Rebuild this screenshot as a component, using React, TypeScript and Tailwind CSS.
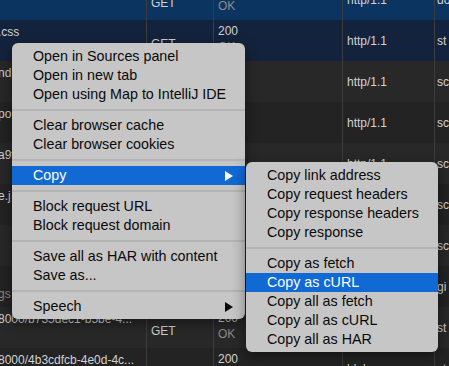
import clsx from "clsx";

type Row = {
  bg: string;
  name: string[];
  method?: string;
  status?: string[];
  protocol?: string;
  type?: string;
};

const rows: Row[] = [
  { bg: "bg-[#0b3460]", name: [], method: "GET", status: ["200", "OK"], protocol: "http/1.1", type: "do" },
  { bg: "bg-[#14233d]", name: [".css", ""], method: "GET", status: ["200", "OK"], protocol: "http/1.1", type: "st" },
  { bg: "bg-[#282828]", name: ["nd", ""], method: "GET", status: ["200", "OK"], protocol: "http/1.1", type: "sc" },
  { bg: "bg-[#232323]", name: ["po", ""], method: "GET", status: ["200", "OK"], protocol: "http/1.1", type: "sc" },
  { bg: "bg-[#282828]", name: ["a9f", ""], method: "GET", status: ["200", "OK"], protocol: "http/1.1", type: "sc" },
  { bg: "bg-[#232323]", name: ["e.j", ""], method: "GET", status: ["200", "OK"], protocol: "http/1.1", type: "sc" },
  { bg: "bg-[#282828]", name: [], method: "GET", status: ["200", "OK"], protocol: "http/1.1", type: "sc" },
  { bg: "bg-[#232323]", name: ["", "gs"], method: "GET", status: ["200", "OK"], protocol: "blob", type: "gi" },
  { bg: "bg-[#282828]", name: ["8000/b735dec1-b5be-4...", ""], method: "GET", status: ["200", "OK"], protocol: "blob", type: "st" },
  { bg: "bg-[#232323]", name: ["8000/4b3cdfcb-4e0d-4c...", ""], method: "GET", status: ["200", "OK"], protocol: "blob", type: "st" },
];

function TableRow({ row }: { row: Row }) {
  return (
    <div className={clsx("flex h-[41px] shrink-0 text-[12px] leading-[16px] text-[#d2d2d2]", row.bg)}>
      <div className="flex w-[147px] shrink-0 flex-col overflow-hidden whitespace-nowrap border-r border-[#3d3d3d] pt-[4px] pl-0">
        <span className="ml-[-2px] h-[16px]">{row.name[0]}</span>
        <span className="ml-[-2px] h-[16px] text-[#8c8c8c]">{row.name[1]}</span>
      </div>
      <div className="flex w-[67px] shrink-0 items-center border-r border-[#3d3d3d] pl-[4px] pt-[6px]">
        {row.method}
      </div>
      <div className="flex w-[129px] shrink-0 flex-col border-r border-[#3d3d3d] pl-[4px] pt-[3px]">
        <span>{row.status?.[0]}</span>
        <span className="text-[#8c8c8c]">{row.status?.[1]}</span>
      </div>
      <div className="flex w-[92px] shrink-0 items-center border-r border-[#3d3d3d] pl-[4px]">
        {row.protocol}
      </div>
      <div className="flex flex-1 items-center pl-[2px]">{row.type}</div>
    </div>
  );
}

function Item({ label, active, arrow }: { label: string; active?: boolean; arrow?: boolean }) {
  return (
    <div
      className={clsx(
        "flex h-[19px] items-center justify-between pl-[21px] pr-[12px] whitespace-nowrap",
        active ? "bg-[#1169d4] text-white" : "text-[#0a0a0a]"
      )}
    >
      <span>{label}</span>
      {arrow && (
        <svg width="8" height="10" viewBox="0 0 8 10">
          <path d="M0 0L8 5L0 10Z" fill="currentColor" />
        </svg>
      )}
    </div>
  );
}

function Sep() {
  return (
    <div className="flex h-[12px] items-center">
      <div className="h-[2px] w-full bg-[#b4b4b4]" />
    </div>
  );
}

export default function App() {
  return (
    <div
      className="relative h-[366px] w-[449px] overflow-hidden bg-[#242424]"
      style={{ fontFamily: '"Liberation Sans", Arial, sans-serif' }}
    >
      <div className="mt-[-21px] flex flex-col">
        {rows.map((r, i) => (
          <TableRow key={i} row={r} />
        ))}
      </div>

      <div className="absolute left-[12px] top-[43px] w-[233px] rounded-[6px] bg-[#c6c6c6] pt-[4px] pb-[3px] text-[14.3px] leading-[19px] shadow-[0_4px_14px_rgba(0,0,0,0.45)]">
        <Item label="Open in Sources panel" />
        <Item label="Open in new tab" />
        <Item label="Open using Map to IntelliJ IDE" />
        <Sep />
        <Item label="Clear browser cache" />
        <Item label="Clear browser cookies" />
        <Sep />
        <Item label="Copy" active arrow />
        <Sep />
        <Item label="Block request URL" />
        <Item label="Block request domain" />
        <Sep />
        <Item label="Save all as HAR with content" />
        <Item label="Save as..." />
        <Sep />
        <Item label="Speech" arrow />
      </div>

      <div className="absolute left-[246px] top-[162px] w-[192px] rounded-[6px] bg-[#c6c6c6] pt-[4px] pb-[3px] text-[14.3px] leading-[19px] shadow-[0_4px_14px_rgba(0,0,0,0.45)]">
        <Item label="Copy link address" />
        <Item label="Copy request headers" />
        <Item label="Copy response headers" />
        <Item label="Copy response" />
        <Sep />
        <Item label="Copy as fetch" />
        <Item label="Copy as cURL" active />
        <Item label="Copy all as fetch" />
        <Item label="Copy all as cURL" />
        <Item label="Copy all as HAR" />
      </div>
    </div>
  );
}
